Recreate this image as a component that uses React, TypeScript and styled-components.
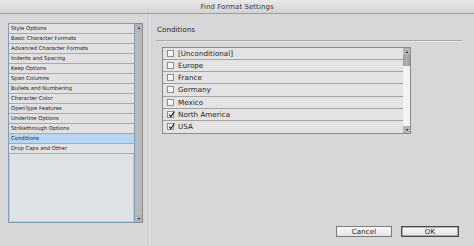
import React from "react";
import styled, { createGlobalStyle } from "styled-components";

const Global = createGlobalStyle`
  html, body { margin: 0; padding: 0; background: #d7d7d7; }
  body { font-family: "DejaVu Sans", "Liberation Sans", sans-serif; color: #1e1e1e; }
`;

const Window = styled.div`
  width: 474px;
  height: 246px;
  display: flex;
  flex-direction: column;
  background: #d7d7d7;
  overflow: hidden;
`;

const TitleBar = styled.div`
  height: 13px;
  flex: none;
  display: flex;
  align-items: center;
  justify-content: center;
  background: linear-gradient(#e9e9e9, #d3d3d3);
  border-bottom: 1px solid #9c9c9c;
  font-size: 7px;
  color: #3a3a3a;
  letter-spacing: 0.05px;
`;

const Body = styled.div`
  flex: 1;
  display: flex;
  min-height: 0;
`;

const LeftPane = styled.div`
  width: 140px;
  padding: 9px 0 0 8px;
  flex: none;
`;

const Divider = styled.div`
  width: 1px;
  flex: none;
  background: #c6c6c6;
  border-right: 1px solid #e4e4e4;
`;

const CatBox = styled.div`
  width: 135px;
  height: 200px;
  display: flex;
  box-sizing: border-box;
`;

const CatList = styled.div`
  flex: 1;
  background: #dfe2e5;
  border: 1px solid #7f9cb8;
  box-shadow: inset 0 0 0 1px #b9cfe3;
  display: flex;
  flex-direction: column;
`;

const CatRow = styled.div<{ $sel?: boolean }>`
  height: 10px;
  box-sizing: border-box;
  border-bottom: 1px solid #a9a9a9;
  background: ${(p) => (p.$sel ? "#b7d6f6" : "#e1e1e1")};
  font-size: 5.3px;
  line-height: 9px;
  padding-left: 2px;
  white-space: nowrap;
  color: #202020;
`;

const VScroll = styled.div<{ $track: string }>`
  width: 8px;
  flex: none;
  box-sizing: border-box;
  background: ${(p) => p.$track};
  border: 1px solid #8a8a8a;
  border-left: none;
  display: flex;
  flex-direction: column;
  align-items: stretch;
`;

const Arrow = styled.div<{ $down?: boolean }>`
  height: 7px;
  flex: none;
  display: flex;
  align-items: center;
  justify-content: center;
  background: #b4b4b4;
  &::after {
    content: "";
    width: 0;
    height: 0;
    border-left: 1.5px solid transparent;
    border-right: 1.5px solid transparent;
    ${(p) => (p.$down ? "border-top: 2px solid #111;" : "border-bottom: 2px solid #111;")}
  }
`;

const Thumb = styled.div`
  height: 11px;
  background: linear-gradient(90deg, #9c9c9c, #b0b0b0, #9c9c9c);
`;

const Fill = styled.div`
  flex: 1;
`;

const RightPane = styled.div`
  flex: 1;
  display: flex;
  flex-direction: column;
  padding: 9px 12px 9px 6px;
  min-width: 0;
`;

const Heading = styled.div`
  font-size: 7.2px;
  line-height: 14px;
  padding-left: 1px;
  color: #1e1e1e;
`;

const Rule = styled.div`
  height: 1px;
  margin-top: 3px;
  background: #a9a9a9;
  border-bottom: 1px solid #e6e6e6;
`;

const CondBox = styled.div`
  margin: 5px 0 0 6px;
  width: 249px;
  height: 87px;
  display: flex;
`;

const CondList = styled.div`
  flex: 1;
  border: 1px solid #8c8c8c;
  border-right: none;
  box-sizing: border-box;
  background: #e3e3e3;
  display: flex;
  flex-direction: column;
`;

const CondRow = styled.div`
  height: 12.43px;
  box-sizing: border-box;
  border-bottom: 1px solid #a2a2a2;
  display: flex;
  align-items: center;
  padding-left: 4px;
  gap: 4px;
  font-size: 7.2px;
  color: #1e1e1e;
  white-space: nowrap;
  &:last-child { border-bottom: none; }
`;

const Check = styled.div`
  width: 7px;
  height: 7px;
  box-sizing: border-box;
  border: 1px solid #8e8e8e;
  background: linear-gradient(#ffffff, #ececec);
  position: relative;
  flex: none;
`;

const Mark = styled.svg`
  position: absolute;
  left: 0px;
  top: -1px;
  overflow: visible;
`;

const Footer = styled.div`
  margin-top: auto;
  display: flex;
  justify-content: flex-end;
  gap: 9px;
  padding-right: 3px;
`;

const Button = styled.button<{ $def?: boolean }>`
  width: ${(p) => (p.$def ? "58px" : "56px")};
  height: 11px;
  box-sizing: border-box;
  padding: 0;
  margin: 0;
  font-family: "DejaVu Sans", "Liberation Sans", sans-serif;
  font-size: 7.2px;
  line-height: 9px;
  color: #1e1e1e;
  background: linear-gradient(#fafafa, #e2e2e2);
  border: 1px solid ${(p) => (p.$def ? "#4a4a4a" : "#7c7c7c")};
  box-shadow: ${(p) => (p.$def ? "inset 0 0 0 0.5px #6a6a6a" : "none")};
  border-radius: 0;
`;

const categories = [
  "Style Options",
  "Basic Character Formats",
  "Advanced Character Formats",
  "Indents and Spacing",
  "Keep Options",
  "Span Columns",
  "Bullets and Numbering",
  "Character Color",
  "OpenType Features",
  "Underline Options",
  "Strikethrough Options",
  "Conditions",
  "Drop Caps and Other",
];

const conditions: { name: string; on: boolean }[] = [
  { name: "[Unconditional]", on: false },
  { name: "Europe", on: false },
  { name: "France", on: false },
  { name: "Germany", on: false },
  { name: "Mexico", on: false },
  { name: "North America", on: true },
  { name: "USA", on: true },
];

export default function App() {
  return (
    <>
      <Global />
      <Window>
        <TitleBar>Find Format Settings</TitleBar>
        <Body>
          <LeftPane>
            <CatBox>
              <CatList>
                {categories.map((c) => (
                  <CatRow key={c} $sel={c === "Conditions"}>
                    {c}
                  </CatRow>
                ))}
              </CatList>
              <VScroll $track="#b9b9b9">
                <Arrow />
                <Fill />
                <Arrow $down />
              </VScroll>
            </CatBox>
          </LeftPane>
          <Divider />
          <RightPane>
            <Heading>Conditions</Heading>
            <Rule />
            <CondBox>
              <CondList>
                {conditions.map((c) => (
                  <CondRow key={c.name}>
                    <Check>
                      {c.on && (
                        <Mark width="7" height="7" viewBox="0 0 7 7">
                          <path d="M1.2 3.6 L2.8 5.6 L6.4 0.6" fill="none" stroke="#1a1a1a" strokeWidth="1.1" />
                        </Mark>
                      )}
                    </Check>
                    {c.name}
                  </CondRow>
                ))}
              </CondList>
              <VScroll $track="#f3f3f3">
                <Arrow />
                <Thumb />
                <Fill />
                <Arrow $down />
              </VScroll>
            </CondBox>
            <Footer>
              <Button>Cancel</Button>
              <Button $def>OK</Button>
            </Footer>
          </RightPane>
        </Body>
      </Window>
    </>
  );
}
